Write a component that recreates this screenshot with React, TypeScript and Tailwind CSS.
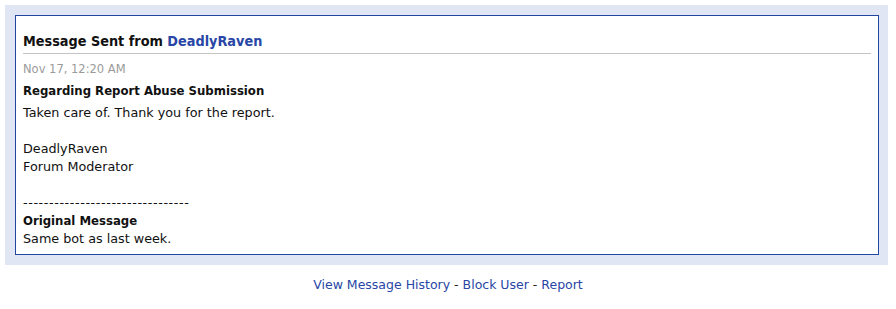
export default function App() {
  return (
    <div className="w-[896px] h-[309px] bg-white pt-[5px] font-['DejaVu_Sans',sans-serif] text-[12.75px] text-[#111]">
      <div className="mx-[5px] w-[883px] bg-[#e1e6f4] p-[10px] pr-[9px] pt-[10px]">
        <div className="border border-[#2246a2] bg-white px-[7px] pt-[16px] pb-[6px]">
          <div className="border-b border-[#c4c4c4] pb-[3px] font-['DejaVu_Sans_Condensed','DejaVu_Sans',sans-serif] text-[14.3px] font-bold leading-[18px]">
            Message Sent from <span className="text-[#2846a6]">DeadlyRaven</span>
          </div>
          <div className="mt-[7px] text-[11.5px] leading-[16px] text-[#9a9a9a]">Nov 17, 12:20 AM</div>
          <div className="mt-[5px] font-['DejaVu_Sans_Condensed','DejaVu_Sans',sans-serif] text-[13px] font-bold leading-[18px]">
            Regarding Report Abuse Submission
          </div>
          <div className="mt-[4px] leading-[18px]">
            <p>Taken care of. Thank you for the report.</p>
            <p className="h-[18px]" />
            <p>DeadlyRaven</p>
            <p>Forum Moderator</p>
            <p className="h-[18px]" />
            <p className="tracking-[0.6px]">--------------------------------</p>
            <p className="font-['DejaVu_Sans_Condensed','DejaVu_Sans',sans-serif] text-[13px] font-bold">Original Message</p>
            <p>Same bot as last week.</p>
          </div>
        </div>
      </div>
      <div className="mt-[11px] text-center text-[12.5px] leading-[18px] text-[#222]">
        <a className="text-[#2846a6]">View Message History</a> - <a className="text-[#2846a6]">Block User</a> -{" "}
        <a className="text-[#2846a6]">Report</a>
      </div>
    </div>
  );
}
